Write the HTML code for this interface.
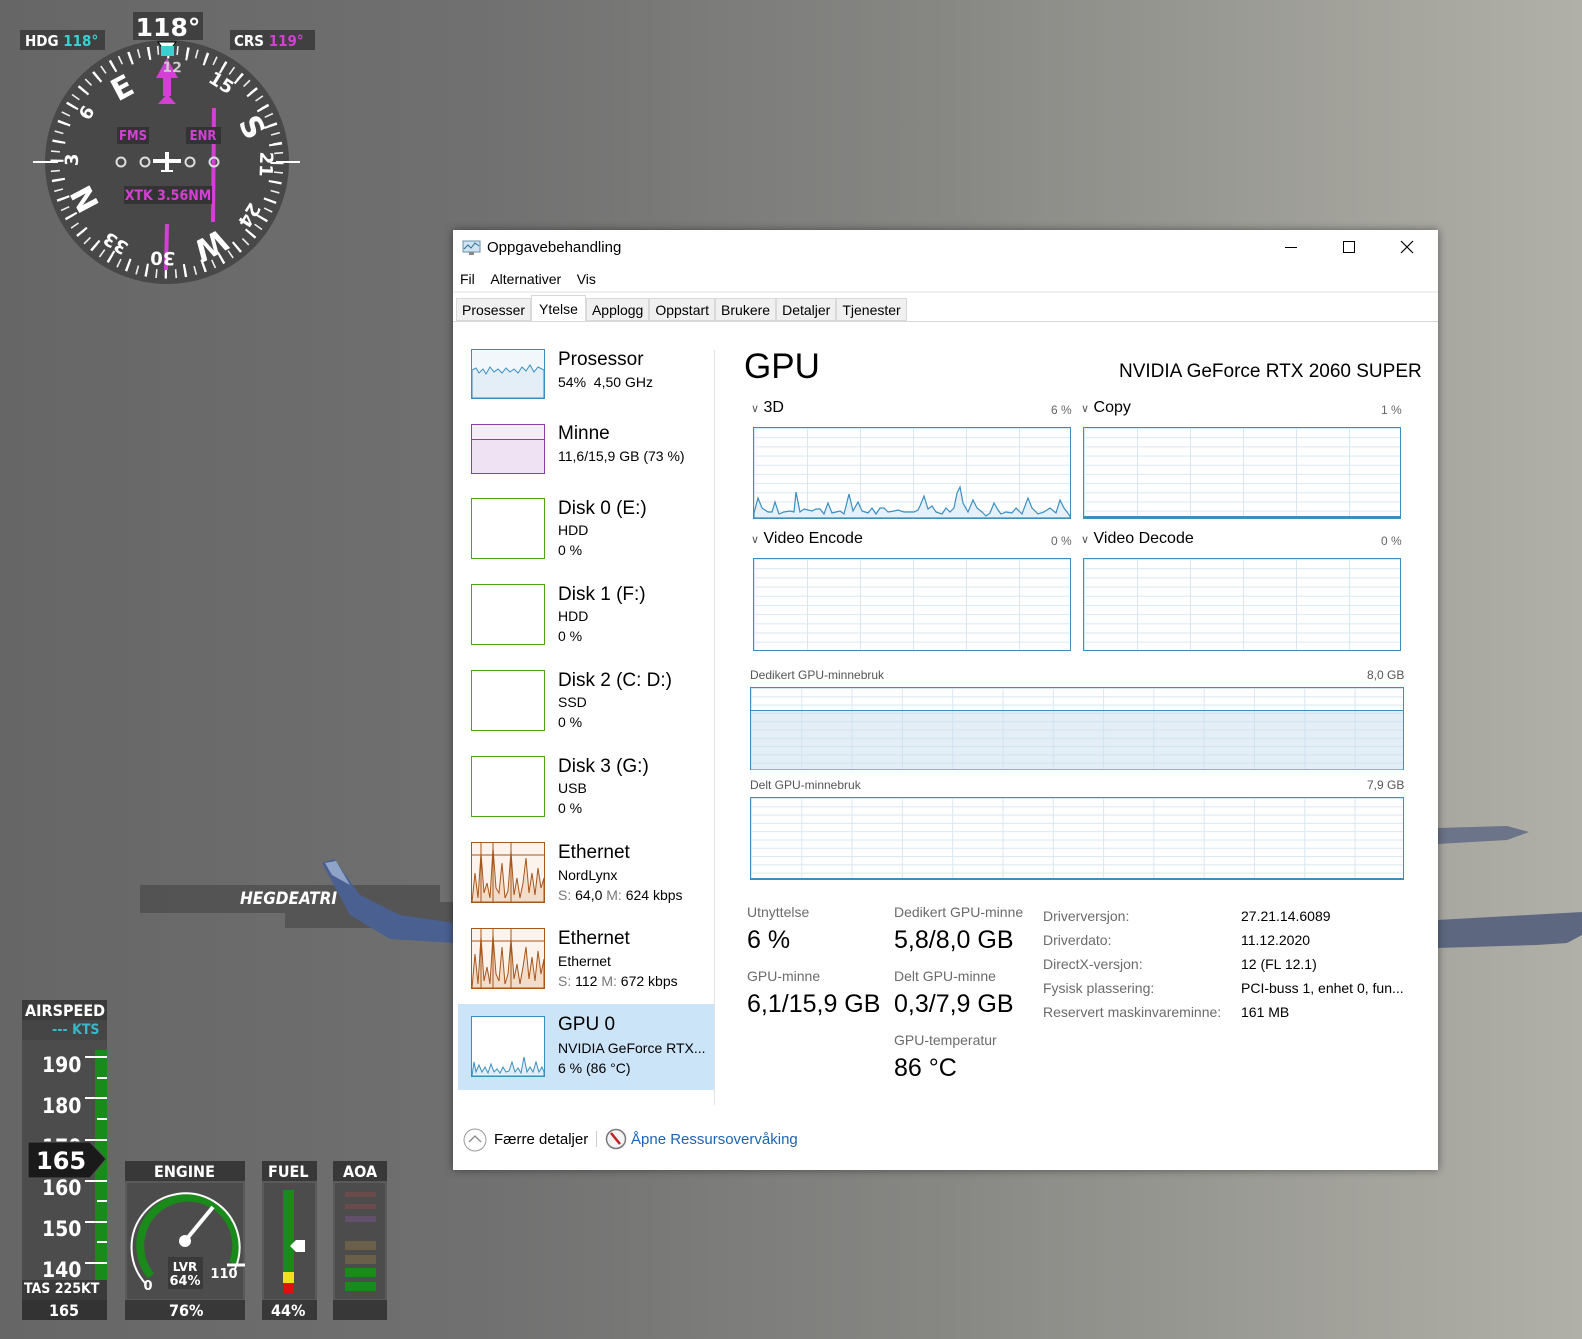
<!DOCTYPE html>
<html><head><meta charset="utf-8"><style>
*{margin:0;padding:0;box-sizing:border-box}
body{width:1582px;height:1339px;overflow:hidden;position:relative;font-family:"Liberation Sans",sans-serif;
background:linear-gradient(90deg,#666 0%,#707070 30%,#878784 60%,#a2a29b 85%,#b0b0a8 100%)}
.a{position:absolute}
.hud{font-family:"DejaVu Sans Condensed","DejaVu Sans",sans-serif;font-weight:bold;color:#fff}
.win{position:absolute;left:453px;top:230px;width:985px;height:940px;background:#fff;box-shadow:0 0 8px rgba(0,0,0,.45);color:#000}
.win .a{white-space:nowrap}
.g{position:absolute;border:1px solid #3a8fc0;background-color:#fff;
background-image:linear-gradient(90deg,#d8e8f2 1px,transparent 1px),linear-gradient(#d8e8f2 1px,transparent 1px);}
.g6{background-size:53px 100%,100% 9.2px}
.th{position:absolute;left:18px;width:74px;height:61px;border:1px solid}
.nm{position:absolute;left:105px;font-size:19px}
.sb{position:absolute;left:105px;font-size:14px;line-height:20px}
.lbl{font-size:14px;color:#6b6b6b}
.val{font-size:25px}
</style></head><body>

<div class="a" style="left:140px;top:885px;width:300px;height:28px;background:#505050;opacity:.85"></div>
<div class="a" style="left:285px;top:902px;width:170px;height:26px;background:#555"></div>
<div class="a hud" style="left:240px;top:889px;font-size:17px;font-style:italic">HEGDEATRI</div>
<svg class="a" style="left:320px;top:855px" width="140" height="90"><path d="M2 8 L14 4 L40 40 L80 60 L135 68 L135 88 L70 84 L30 60 Z" fill="#4a6090"/><path d="M5 8 L16 6 L30 30 L12 20Z" fill="#8fa3c8"/></svg>
<svg class="a" style="left:1437px;top:820px" width="145" height="140"><path d="M0 8 L70 6 L92 12 L70 20 L0 24Z" fill="#6b7488"/><path d="M0 100 L145 92 L145 115 L130 123 L100 125 L0 128Z" fill="#5d6880"/></svg>

<svg class="a" style="left:0;top:0" width="320" height="290">
<circle cx="167" cy="162" r="122" fill="#484848"/>
<circle cx="167" cy="162" r="112" fill="none" stroke="#eee" stroke-width="9" stroke-dasharray="1.6 8.17"/>
<circle cx="167" cy="162" r="110" fill="none" stroke="#fff" stroke-width="13" stroke-dasharray="2.2 17.0"/>
<circle cx="167" cy="162" r="100" fill="#484848"/>
<line x1="33" y1="162" x2="58" y2="162" stroke="#fff" stroke-width="2"/>
<line x1="276" y1="162" x2="300" y2="162" stroke="#fff" stroke-width="2"/>
<rect x="20" y="30" width="85" height="20" fill="#404040"/>
<text x="25" y="46" font-family="DejaVu Sans Condensed" font-weight="bold" font-size="15" fill="#fff">HDG <tspan fill="#3ccfd0">118°</tspan></text>
<rect x="230" y="30" width="85" height="20" fill="#404040"/>
<text x="234" y="46" font-family="DejaVu Sans Condensed" font-weight="bold" font-size="15" fill="#fff">CRS <tspan fill="#d43fd4">119°</tspan></text>
<rect x="133" y="12" width="70" height="28" fill="#404040"/>
<text x="168" y="36" text-anchor="middle" font-family="DejaVu Sans" font-weight="bold" font-size="25" fill="#fff">118°</text>
<path d="M158 42 L176 42 L167 54Z" fill="#fff" stroke="#000"/>
<rect x="161" y="46" width="13" height="10" fill="#3ccfd0"/>
<path d="M167 58 L178 78 L171 78 L171 96 L163 96 L163 78 L156 78Z" fill="#d43fd4"/>
<path d="M167 94 L176 104 L158 104Z" fill="#d43fd4"/>
<line x1="214" y1="108" x2="213" y2="222" stroke="#d43fd4" stroke-width="4"/>
<line x1="167" y1="224" x2="166" y2="270" stroke="#d43fd4" stroke-width="4"/>
<g font-family="DejaVu Sans" font-weight="bold" fill="#fff" text-anchor="middle">
<text transform="translate(127,97) rotate(-28)" font-size="30">E</text>
<text transform="translate(218,88) rotate(32)" font-size="18">15</text>
<text transform="translate(243,132) rotate(62)" font-size="30">S</text>
<text transform="translate(260,164) rotate(92)" font-size="18">21</text>
<text transform="translate(244,212) rotate(122)" font-size="18">24</text>
<text transform="translate(206,236) rotate(152)" font-size="30">W</text>
<text transform="translate(163,252) rotate(182)" font-size="18">30</text>
<text transform="translate(119,238) rotate(212)" font-size="18">33</text>
<text transform="translate(94,194) rotate(242)" font-size="30">N</text>
<text transform="translate(78,160) rotate(-88)" font-size="18">3</text>
<text transform="translate(92,116) rotate(-58)" font-size="18">6</text>
<text transform="translate(172,72) rotate(2)" font-size="14" fill="#ccc">12</text>
</g>
<rect x="117" y="127" width="32" height="17" fill="#333"/>
<text x="133" y="140" text-anchor="middle" font-family="DejaVu Sans Condensed" font-weight="bold" font-size="13" fill="#d43fd4">FMS</text>
<rect x="186" y="127" width="35" height="17" fill="#333"/>
<text x="203" y="140" text-anchor="middle" font-family="DejaVu Sans Condensed" font-weight="bold" font-size="13" fill="#d43fd4">ENR</text>
<rect x="124" y="186" width="88" height="18" fill="#333"/>
<text x="168" y="200" text-anchor="middle" font-family="DejaVu Sans Condensed" font-weight="bold" font-size="14" fill="#d43fd4">XTK 3.56NM</text>
<g fill="none" stroke="#ddd" stroke-width="2"><circle cx="121" cy="162" r="4.5"/><circle cx="145" cy="162" r="4.5"/><circle cx="190" cy="162" r="4.5"/><circle cx="214" cy="162" r="4.5"/></g>
<path d="M165 152 h4 v7 h12 v4 h-12 v7 h4 v2 h-12 v-2 h4 v-7 h-12 v-4 h12z" fill="#fff"/>
</svg>

<div class="a" style="left:22px;top:1000px;width:85px;height:20px;background:#3a3a3a"></div>
<div class="a hud" style="left:25px;top:1001px;font-size:16px">AIRSPEED</div>
<div class="a" style="left:22px;top:1020px;width:85px;height:20px;background:#454545"></div>
<div class="a hud" style="left:52px;top:1022px;font-size:14px;color:#39b8c8">--- KTS</div>
<div class="a" style="left:22px;top:1040px;width:85px;height:240px;background:#4c4c4c"></div>
<div class="a" style="left:95px;top:1050px;width:12px;height:230px;background:#1a8a1a"></div>
<div class="a hud" style="left:42px;top:1045px;font-size:21px;line-height:41px">190<br>180<br>170<br>160<br>150<br>140</div>
<svg class="a" style="left:85px;top:1040px" width="22" height="240"><g stroke="#fff" stroke-width="2"><line x1="0" y1="17" x2="22" y2="17"/><line x1="12" y1="38" x2="22" y2="38"/><line x1="0" y1="58" x2="22" y2="58"/><line x1="12" y1="79" x2="22" y2="79"/><line x1="0" y1="100" x2="22" y2="100"/><line x1="0" y1="141" x2="22" y2="141"/><line x1="12" y1="161" x2="22" y2="161"/><line x1="0" y1="182" x2="22" y2="182"/><line x1="12" y1="202" x2="22" y2="202"/><line x1="0" y1="223" x2="22" y2="223"/></g></svg>
<svg class="a" style="left:26px;top:1140px" width="82" height="40"><path d="M2 2 H64 L80 19 L64 38 H2Z" fill="#1a1a1a" stroke="#555"/><text x="10" y="29" font-family="DejaVu Sans" font-weight="bold" font-size="24" fill="#fff">165</text></svg>
<div class="a" style="left:22px;top:1280px;width:85px;height:20px;background:#3a3a3a"></div>
<div class="a hud" style="left:24px;top:1281px;font-size:14px">TAS 225KT</div>
<div class="a" style="left:22px;top:1300px;width:85px;height:20px;background:#333"></div>
<div class="a hud" style="left:49px;top:1301px;font-size:16px">165</div>

<div class="a" style="left:125px;top:1161px;width:120px;height:20px;background:#383838"></div>
<div class="a hud" style="left:154px;top:1162px;font-size:16px">ENGINE</div>
<div class="a" style="left:125px;top:1181px;width:120px;height:120px;background:#4c4c4c;border:2px solid #5a5a5a"></div>
<svg class="a" style="left:125px;top:1181px" width="125" height="120">
<path d="M26 95 A48 48 0 1 1 108 82" fill="none" stroke="#1a8a1a" stroke-width="8"/>
<path d="M20 102 A54 54 0 1 1 110 88" fill="none" stroke="#fff" stroke-width="2"/>
<line x1="60" y1="60" x2="88" y2="26" stroke="#fff" stroke-width="4"/>
<circle cx="60" cy="60" r="6" fill="#fff"/>
<line x1="102" y1="84" x2="120" y2="84" stroke="#fff" stroke-width="3"/>
<rect x="43" y="76" width="35" height="32" fill="#3a3a3a"/>
<text x="60" y="90" text-anchor="middle" font-family="DejaVu Sans" font-weight="bold" font-size="12" fill="#fff">LVR</text>
<text x="60" y="104" text-anchor="middle" font-family="DejaVu Sans" font-weight="bold" font-size="13" fill="#fff">64%</text>
<text x="23" y="109" text-anchor="middle" font-family="DejaVu Sans" font-weight="bold" font-size="13" fill="#fff">0</text>
<text x="99" y="97" text-anchor="middle" font-family="DejaVu Sans" font-weight="bold" font-size="13" fill="#fff">110</text>
</svg>
<div class="a" style="left:125px;top:1300px;width:120px;height:20px;background:#383838"></div>
<div class="a hud" style="left:169px;top:1301px;font-size:16px">76%</div>

<div class="a" style="left:262px;top:1161px;width:55px;height:20px;background:#383838"></div>
<div class="a hud" style="left:268px;top:1162px;font-size:16px">FUEL</div>
<div class="a" style="left:262px;top:1181px;width:55px;height:120px;background:#4c4c4c;border:2px solid #5a5a5a"></div>
<div class="a" style="left:283px;top:1190px;width:11px;height:103px;background:#1a8a1a"></div>
<div class="a" style="left:283px;top:1272px;width:11px;height:11px;background:#f0e020"></div>
<div class="a" style="left:283px;top:1283px;width:11px;height:10px;background:#e01010"></div>
<svg class="a" style="left:290px;top:1238px" width="16" height="16"><path d="M0 8 L6 2 H15 V14 H6Z" fill="#fff"/></svg>
<div class="a" style="left:262px;top:1300px;width:55px;height:20px;background:#383838"></div>
<div class="a hud" style="left:271px;top:1301px;font-size:16px">44%</div>

<div class="a" style="left:333px;top:1161px;width:54px;height:20px;background:#383838"></div>
<div class="a hud" style="left:343px;top:1162px;font-size:16px">AOA</div>
<div class="a" style="left:333px;top:1181px;width:54px;height:120px;background:#4c4c4c;border:2px solid #5a5a5a"></div>
<div class="a" style="left:345px;top:1192px;width:31px;height:5px;background:#6a4a4a"></div>
<div class="a" style="left:345px;top:1204px;width:31px;height:5px;background:#6a4a4a"></div>
<div class="a" style="left:345px;top:1216px;width:31px;height:6px;background:#62506a"></div>
<div class="a" style="left:345px;top:1241px;width:31px;height:9px;background:#6a604a"></div>
<div class="a" style="left:345px;top:1255px;width:31px;height:9px;background:#6a604a"></div>
<div class="a" style="left:345px;top:1268px;width:31px;height:9px;background:#1a8a1a"></div>
<div class="a" style="left:345px;top:1282px;width:31px;height:9px;background:#1a8a1a"></div>
<div class="a" style="left:333px;top:1300px;width:54px;height:20px;background:#383838"></div>

<div class="win">
<svg class="a" style="left:9px;top:10px" width="20" height="16"><rect x="1" y="1" width="17" height="11" fill="#cfe3f0" stroke="#6a8fa8"/><path d="M2 9 L6 5 L9 8 L13 3 L17 6" fill="none" stroke="#2a6f9a"/><rect x="7" y="12" width="5" height="3" fill="#888"/></svg>
<div class="a" style="left:34px;top:9px;font-size:15px">Oppgavebehandling</div>
<div class="a" style="left:832px;top:17px;width:12px;height:1px;background:#000"></div>
<div class="a" style="left:890px;top:11px;width:12px;height:12px;border:1px solid #000"></div>
<svg class="a" style="left:947px;top:10px" width="14" height="14"><path d="M1 1 L13 13 M13 1 L1 13" stroke="#000" stroke-width="1.2"/></svg>
<div class="a" style="left:7px;top:41px;font-size:14px">Fil&nbsp;&nbsp;&nbsp;&nbsp;Alternativer&nbsp;&nbsp;&nbsp;&nbsp;Vis</div>
<div class="a" style="left:0;top:61px;width:985px;height:2px;background:#f0f0f0"></div>
<div class="a" style="left:0;top:91px;width:985px;height:1px;background:#d9d9d9"></div>
<div class="a" style="left:3px;top:68px;height:23px;font-size:14px;line-height:23px;display:flex;background:#f0f0f0">
<span style="padding:0 5px;border:1px solid #d9d9d9">Prosesser</span><span style="padding:0 7px;background:#fff;border:1px solid #d9d9d9;border-bottom:none;margin-top:-3px;line-height:26px">Ytelse</span><span style="padding:0 5px;border:1px solid #d9d9d9">Applogg</span><span style="padding:0 5px;border:1px solid #d9d9d9">Oppstart</span><span style="padding:0 5px;border:1px solid #d9d9d9">Brukere</span><span style="padding:0 5px;border:1px solid #d9d9d9">Detaljer</span><span style="padding:0 5px;border:1px solid #d9d9d9">Tjenester</span></div>

<div class="a" style="left:261px;top:120px;width:1px;height:755px;background:#e3e3e3"></div>
<div class="a" style="left:5px;top:774px;width:256px;height:86px;background:#cce4f7"></div>

<div class="th" style="top:119px;height:50px;border-color:#3a8fc0;background:#f1f7fb"><svg width="72" height="48"><path d="M0 20 L4 18 L7 23 L11 19 L14 24 L18 17 L22 22 L26 19 L30 23 L34 18 L38 22 L42 19 L46 23 L50 17 L54 21 L58 15 L62 22 L66 17 L72 20 V48 H0Z" fill="#e3eef6" stroke="#3a8fc0"/></svg></div>
<div class="nm" style="top:119px">Prosessor</div><div class="sb" style="top:142px">54%&nbsp;&nbsp;4,50 GHz</div>

<div class="th" style="top:194px;height:50px;border-color:#8b3fa8;background:#f4edf6"><div style="margin-top:14px;height:34px;border-top:1px solid #8b3fa8;background:#efe3f3"></div></div>
<div class="nm" style="top:193px">Minne</div><div class="sb" style="top:216px">11,6/15,9 GB (73 %)</div>

<div class="th" style="top:268px;border-color:#4fa60c"></div>
<div class="nm" style="top:268px">Disk 0 (E:)</div><div class="sb" style="top:290px">HDD<br>0 %</div>
<div class="th" style="top:354px;border-color:#4fa60c"></div>
<div class="nm" style="top:354px">Disk 1 (F:)</div><div class="sb" style="top:376px">HDD<br>0 %</div>
<div class="th" style="top:440px;border-color:#4fa60c"></div>
<div class="nm" style="top:440px">Disk 2 (C: D:)</div><div class="sb" style="top:462px">SSD<br>0 %</div>
<div class="th" style="top:526px;border-color:#4fa60c"></div>
<div class="nm" style="top:526px">Disk 3 (G:)</div><div class="sb" style="top:548px">USB<br>0 %</div>

<div class="th" style="top:612px;border-color:#a7561c;background:#fbf3ec"><svg width="72" height="59"><path d="M0 59 L3 30 L6 55 L9 10 L12 50 L15 40 L18 55 L21 5 L24 45 L27 50 L30 20 L33 55 L36 48 L39 8 L42 52 L45 35 L48 55 L51 40 L54 15 L57 50 L60 30 L63 52 L66 25 L69 45 L72 35 V59Z" fill="#f3dcc8" stroke="#a7561c"/><g stroke="#a7561c"><line x1="0" y1="12" x2="72" y2="12"/><line x1="9" y1="0" x2="9" y2="59"/><line x1="21" y1="0" x2="21" y2="59"/><line x1="39" y1="0" x2="39" y2="59"/></g></svg></div>
<div class="nm" style="top:612px">Ethernet</div><div class="sb" style="top:635px">NordLynx<br><span style="color:#777">S:</span> 64,0 <span style="color:#777">M:</span> 624 kbps</div>
<div class="th" style="top:698px;border-color:#a7561c;background:#fbf3ec"><svg width="72" height="59"><path d="M0 59 L3 25 L6 55 L9 8 L12 52 L15 38 L18 55 L21 6 L24 45 L27 52 L30 18 L33 55 L36 45 L39 10 L42 50 L45 35 L48 55 L51 38 L54 18 L57 50 L60 28 L63 52 L66 22 L69 45 L72 30 V59Z" fill="#f3dcc8" stroke="#a7561c"/><g stroke="#a7561c"><line x1="0" y1="12" x2="72" y2="12"/><line x1="9" y1="0" x2="9" y2="59"/><line x1="21" y1="0" x2="21" y2="59"/><line x1="39" y1="0" x2="39" y2="59"/></g></svg></div>
<div class="nm" style="top:698px">Ethernet</div><div class="sb" style="top:721px">Ethernet<br><span style="color:#777">S:</span> 112 <span style="color:#777">M:</span> 672 kbps</div>

<div class="th" style="top:786px;border-color:#3a8fc0;background:#fff"><svg width="72" height="59"><path d="M0 59 L2 45 L4 55 L7 48 L10 55 L13 50 L16 56 L19 47 L22 55 L25 52 L28 56 L31 50 L34 55 L37 54 L40 45 L43 55 L46 51 L49 56 L52 40 L55 55 L58 50 L61 55 L64 45 L67 55 L70 50 L72 55 V59Z" fill="#e3eef6" stroke="#3a8fc0"/></svg></div>
<div class="nm" style="top:784px">GPU 0</div><div class="sb" style="top:808px">NVIDIA GeForce RTX...<br>6 % (86 °C)</div>

<div class="a" style="left:291px;top:117px;font-size:35px">GPU</div>
<div class="a" style="left:666px;top:131px;font-size:19px">NVIDIA GeForce RTX 2060 SUPER</div>

<div class="a" style="left:298px;top:169px;font-size:16px"><span style="font-size:11px;color:#555">∨</span> 3D</div>
<div class="a" style="left:598px;top:173px;font-size:12px;color:#666">6 %</div>
<div class="a" style="left:628px;top:169px;font-size:16px"><span style="font-size:11px;color:#555">∨</span> Copy</div>
<div class="a" style="left:928px;top:173px;font-size:12px;color:#666">1 %</div>
<div class="g g6" style="left:300px;top:197px;width:318px;height:92px"><svg class="a" style="left:0;top:0" width="316" height="90"><path d="M0 90 L0 85 L4 70 L8 80 L14 84 L18 84 L21 74 L25 86 L30 84 L36 83 L40 84 L42 64 L46 84 L50 81 L58 83 L62 81 L66 81 L70 86 L74 75 L78 85 L86 83 L90 86 L95 66 L99 83 L104 74 L108 83 L114 85 L118 80 L122 86 L126 80 L130 80 L134 84 L140 83 L144 82 L150 84 L160 84 L164 82 L166 78 L170 68 L174 81 L178 78 L182 84 L188 86 L192 80 L196 84 L200 80 L203 65 L206 59 L209 75 L214 84 L219 72 L223 80 L228 84 L232 88 L236 85 L240 75 L244 82 L247 86 L252 84 L258 85 L262 80 L268 86 L274 70 L278 80 L284 86 L290 84 L296 80 L302 85 L306 72 L310 80 L316 88 L316 90Z" fill="#e5f0f8" stroke="#3a8fc0" stroke-width="1.2"/></svg></div>
<div class="g g6" style="left:630px;top:197px;width:318px;height:92px"><div class="a" style="left:0;bottom:0;width:100%;height:2px;background:#3a8fc0"></div></div>

<div class="a" style="left:298px;top:300px;font-size:16px"><span style="font-size:11px;color:#555">∨</span> Video Encode</div>
<div class="a" style="left:598px;top:304px;font-size:12px;color:#666">0 %</div>
<div class="a" style="left:628px;top:300px;font-size:16px"><span style="font-size:11px;color:#555">∨</span> Video Decode</div>
<div class="a" style="left:928px;top:304px;font-size:12px;color:#666">0 %</div>
<div class="g g6" style="left:300px;top:328px;width:318px;height:93px"></div>
<div class="g g6" style="left:630px;top:328px;width:318px;height:93px"></div>

<div class="a" style="left:297px;top:438px;font-size:12px;color:#555">Dedikert GPU-minnebruk</div>
<div class="a" style="left:914px;top:438px;font-size:12px;color:#555">8,0 GB</div>
<div class="g" style="left:297px;top:457px;width:654px;height:83px;background-size:50.3px 100%,100% 8.3px"><div class="a" style="left:0;top:22px;width:100%;height:60px;background:rgba(200,222,238,.5);border-top:1px solid #3a8fc0"></div></div>
<div class="a" style="left:297px;top:548px;font-size:12px;color:#555">Delt GPU-minnebruk</div>
<div class="a" style="left:914px;top:548px;font-size:12px;color:#555">7,9 GB</div>
<div class="g" style="left:297px;top:567px;width:654px;height:83px;background-size:50.3px 100%,100% 8.3px"><div class="a" style="left:0;bottom:0;width:100%;height:1px;background:#3a8fc0"></div></div>

<div class="a lbl" style="left:294px;top:674px">Utnyttelse</div>
<div class="a val" style="left:294px;top:696px">6 %</div>
<div class="a lbl" style="left:294px;top:738px">GPU-minne</div>
<div class="a val" style="left:294px;top:760px">6,1/15,9 GB</div>
<div class="a lbl" style="left:441px;top:674px">Dedikert GPU-minne</div>
<div class="a val" style="left:441px;top:696px">5,8/8,0 GB</div>
<div class="a lbl" style="left:441px;top:738px">Delt GPU-minne</div>
<div class="a val" style="left:441px;top:760px">0,3/7,9 GB</div>
<div class="a lbl" style="left:441px;top:802px">GPU-temperatur</div>
<div class="a val" style="left:441px;top:824px">86 °C</div>
<div class="a lbl" style="left:590px;top:674px;line-height:24px">Driverversjon:<br>Driverdato:<br>DirectX-versjon:<br>Fysisk plassering:<br>Reservert maskinvareminne:</div>
<div class="a" style="left:788px;top:674px;line-height:24px;font-size:14px">27.21.14.6089<br>11.12.2020<br>12 (FL 12.1)<br>PCI-buss 1, enhet 0, fun...<br>161 MB</div>

<svg class="a" style="left:10px;top:898px" width="24" height="24"><circle cx="12" cy="12" r="11" fill="none" stroke="#999"/><path d="M6 14 L12 8 L18 14" fill="none" stroke="#888" stroke-width="1.3"/></svg>
<div class="a" style="left:41px;top:901px;font-size:15px">Færre detaljer</div>
<div class="a" style="left:143px;top:901px;width:1px;height:16px;background:#ccc"></div>
<svg class="a" style="left:152px;top:898px" width="22" height="22"><circle cx="11" cy="11" r="9.5" fill="#f4f4f4" stroke="#777" stroke-width="1.5"/><path d="M6 5 L15 16" stroke="#c02020" stroke-width="2.5"/></svg>
<div class="a" style="left:178px;top:901px;font-size:15px;color:#1e64b4">Åpne Ressursovervåking</div>
</div>
</body></html>
